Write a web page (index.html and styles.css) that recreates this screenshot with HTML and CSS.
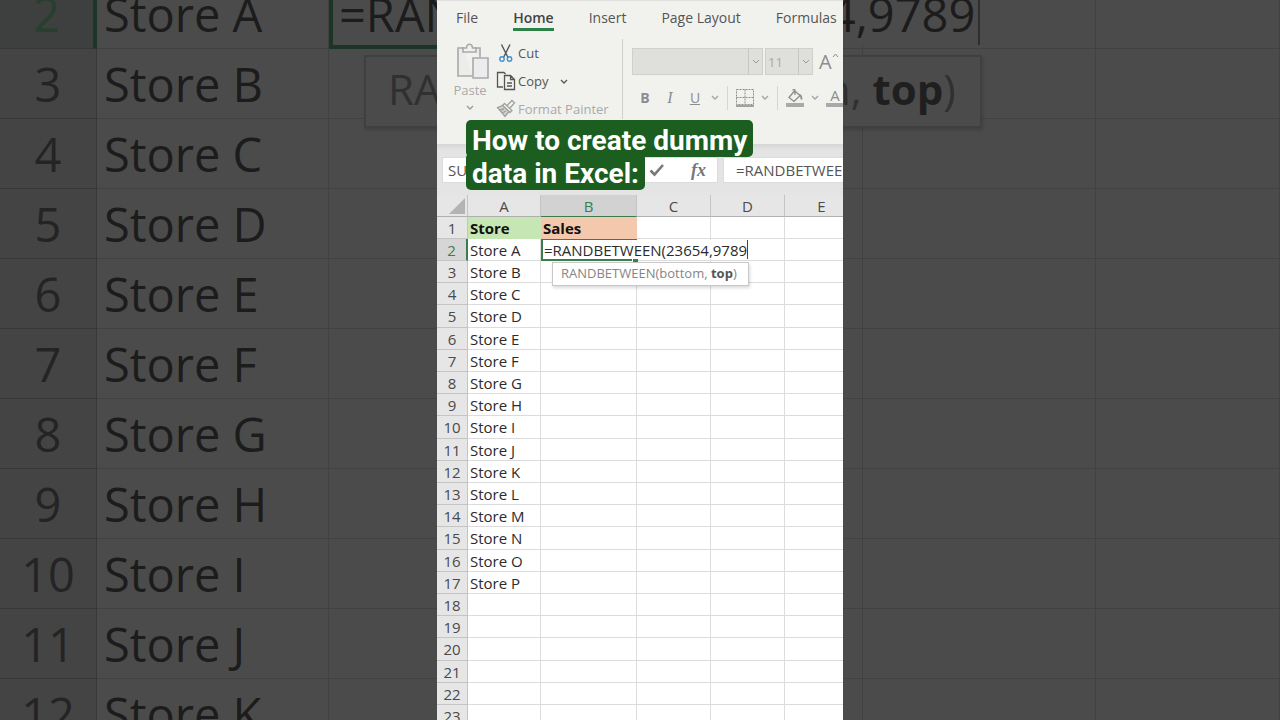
FILE: index.html
```
<!DOCTYPE html>
<html lang="en">
<head>
    <meta charset="utf-8">
    <meta name="viewport" content="width=device-width, initial-scale=1.0">
    <title>How to create dummy data in Excel</title>
    <link rel="stylesheet" href="styles.css">
</head>
<body>
    <div class="stage">
        <!-- Enlarged dark copy of the sheet -->
        <div class="backdrop" aria-hidden="true">
            <table class="sheet">
                <colgroup><col class="col-num"><col class="col-a"><col class="col-b"><col class="col-c"><col class="col-d"><col></colgroup>
                <tbody>
                    <tr class="active"><th>2</th><td>Store A</td><td class="editing">
                        <div class="editor">=RANDBETWEEN(23654,9789</div>
                        <div class="hint">RANDBETWEEN(bottom, <b>top</b>)</div>
                    </td><td></td><td></td><td></td></tr>
                    <tr><th>3</th><td>Store B</td><td></td><td></td><td></td><td></td></tr>
                    <tr><th>4</th><td>Store C</td><td></td><td></td><td></td><td></td></tr>
                    <tr><th>5</th><td>Store D</td><td></td><td></td><td></td><td></td></tr>
                    <tr><th>6</th><td>Store E</td><td></td><td></td><td></td><td></td></tr>
                    <tr><th>7</th><td>Store F</td><td></td><td></td><td></td><td></td></tr>
                    <tr><th>8</th><td>Store G</td><td></td><td></td><td></td><td></td></tr>
                    <tr><th>9</th><td>Store H</td><td></td><td></td><td></td><td></td></tr>
                    <tr><th>10</th><td>Store I</td><td></td><td></td><td></td><td></td></tr>
                    <tr><th>11</th><td>Store J</td><td></td><td></td><td></td><td></td></tr>
                    <tr><th>12</th><td>Store K</td><td></td><td></td><td></td><td></td></tr>
                </tbody>
            </table>
        </div>

        <main class="phone">
            <header class="ribbon">
                <nav class="tabs">
                    <a href="#">File</a>
                    <a href="#" class="current">Home</a>
                    <a href="#">Insert</a>
                    <a href="#">Page Layout</a>
                    <a href="#">Formulas</a>
                </nav>
                <div class="groups">
                    <div class="group clipboard">
                        <button class="paste">
                            <svg width="34" height="36" viewBox="0 0 34 36" fill="none" stroke="#a9a9a9" stroke-width="1.6">
                                <path d="M8 5H2v28h14M24 14V5h-6" fill="#ececea"/>
                                <path d="M7 9V5h3.500c.5-5 5.500-5 6 0H20v4z" fill="#f1f2ee"/>
                                <path d="M17 15h15v20H17z" fill="#ececef"/>
                            </svg>
                            <span>Paste</span>
                            <svg class="chevron" width="8" height="5" viewBox="0 0 8 5"><path d="M1 1l3 3 3-3"/></svg>
                        </button>
                        <div class="clip-actions">
                            <button>
                                <svg width="20" height="20" viewBox="0 0 20 20" fill="none">
                                    <path d="M5.500 1.500l6.500 13M14 1.500l-6.500 13" stroke="#555" stroke-width="1.400"/>
                                    <circle cx="6" cy="16" r="2.200" stroke="#3b93cf" stroke-width="1.400"/>
                                    <circle cx="13.500" cy="16" r="2.200" stroke="#3b93cf" stroke-width="1.400"/>
                                </svg>
                                <span>Cut</span>
                            </button>
                            <button>
                                <svg width="20" height="20" viewBox="0 0 20 20" fill="none" stroke="#555" stroke-width="1.300">
                                    <path d="M7 16H1.500V1.500H8l1.500 1.500"/>
                                    <path d="M8.500 4.500h6l4 4v10h-10zM14.500 4.500v4h4M11 12h5M11 15h5"/>
                                </svg>
                                <span>Copy</span>
                                <svg class="chevron dark" width="8" height="5" viewBox="0 0 8 5"><path d="M1 1l3 3 3-3"/></svg>
                            </button>
                            <button class="off">
                                <svg width="20" height="20" viewBox="0 0 20 20" fill="none" stroke="#a0a0a0" stroke-width="1.300">
                                    <path d="M11 6.500l5-5 2.500 2.500-4.500 5"/>
                                    <path d="M8.500 4.500l7.500 7-2 2-7.500-7z"/>
                                    <path d="M6.500 6.500l-5 2 7.500 9 4-5z" fill="#d0d0ce"/>
                                    <path d="M4 11l4-1M6 14l4-2"/>
                                </svg>
                                <span>Format Painter</span>
                            </button>
                        </div>
                    </div>
                    <div class="group font">
                        <div class="font-row">
                            <select class="font-name" aria-label="Font"><option></option></select>
                            <select class="font-size" aria-label="Font size"><option>11</option></select>
                            <button class="grow" aria-label="Increase font size">A<svg width="7" height="5" viewBox="0 0 7 5"><path d="M1 4l2.500-3L6 4"/></svg></button>
                        </div>
                        <div class="font-row tools">
                            <button><b>B</b></button>
                            <button><i>I</i></button>
                            <button><u>U</u></button>
                            <svg class="chevron" width="8" height="5" viewBox="0 0 8 5"><path d="M1 1l3 3 3-3"/></svg>
                            <span class="sep"></span>
                            <button aria-label="Borders">
                                <svg width="18" height="18" viewBox="0 0 18 18" fill="none" stroke="#8d8d8d">
                                    <path d="M.5 .5h17v15H.5zM9 .5v15M.5 8.500h17" stroke-dasharray="2 1"/>
                                    <path d="M0 17h18" stroke-width="1.600"/>
                                </svg>
                            </button>
                            <svg class="chevron" width="8" height="5" viewBox="0 0 8 5"><path d="M1 1l3 3 3-3"/></svg>
                            <span class="sep"></span>
                            <button aria-label="Fill color">
                                <svg width="18" height="18" viewBox="0 0 18 18" fill="none" stroke="#8d8d8d" stroke-width="1.300">
                                    <path d="M8 2.500L3 8.500l5 4 6-6-5-4.500zM9 6V1.500c0-1.500-2-1.500-2 0"/>
                                    <path d="M13 5.500c2 .5 2.500 3 2.500 5" stroke-width="1.800"/>
                                    <path d="M0 16h18" stroke="#a9a9a9" stroke-width="4"/>
                                </svg>
                            </button>
                            <svg class="chevron" width="8" height="5" viewBox="0 0 8 5"><path d="M1 1l3 3 3-3"/></svg>
                            <button class="font-color" aria-label="Font color">A</button>
                        </div>
                    </div>
                </div>
            </header>

            <div class="formula-bar">
                <div class="name-box">
                    <input class="name" aria-label="Name box" value="SUM">
                    <svg width="16" height="14" viewBox="0 0 16 14" fill="none" stroke="#777" stroke-width="2.600"><path d="M1.500 7.500l4 4L14 2"/></svg>
                    <span class="fx">fx</span>
                </div>
                <input class="formula" aria-label="Formula" value="=RANDBETWEEN(23654,9789">
            </div>

            <table class="sheet">
                <colgroup><col class="col-num"><col class="col-a"><col class="col-b"><col class="col-c"><col class="col-d"><col></colgroup>
                <thead>
                    <tr><th class="corner"><svg width="16" height="16" viewBox="0 0 16 16"><path d="M16 0v16H0z" fill="#b3b3b3"/></svg></th><th>A</th><th class="selected">B</th><th>C</th><th>D</th><th>E</th></tr>
                </thead>
                <tbody>
                    <tr><th>1</th><td class="store-head">Store</td><td class="sales-head">Sales</td><td></td><td></td><td></td></tr>
                    <tr class="active"><th>2</th><td>Store A</td><td class="editing">
                        <input class="editor" aria-label="Cell B2" value="=RANDBETWEEN(23654,9789">
                        <div class="hint">RANDBETWEEN(bottom, <b>top</b>)</div>
                    </td><td></td><td></td><td></td></tr>
                    <tr><th>3</th><td>Store B</td><td></td><td></td><td></td><td></td></tr>
                    <tr><th>4</th><td>Store C</td><td></td><td></td><td></td><td></td></tr>
                    <tr><th>5</th><td>Store D</td><td></td><td></td><td></td><td></td></tr>
                    <tr><th>6</th><td>Store E</td><td></td><td></td><td></td><td></td></tr>
                    <tr><th>7</th><td>Store F</td><td></td><td></td><td></td><td></td></tr>
                    <tr><th>8</th><td>Store G</td><td></td><td></td><td></td><td></td></tr>
                    <tr><th>9</th><td>Store H</td><td></td><td></td><td></td><td></td></tr>
                    <tr><th>10</th><td>Store I</td><td></td><td></td><td></td><td></td></tr>
                    <tr><th>11</th><td>Store J</td><td></td><td></td><td></td><td></td></tr>
                    <tr><th>12</th><td>Store K</td><td></td><td></td><td></td><td></td></tr>
                    <tr><th>13</th><td>Store L</td><td></td><td></td><td></td><td></td></tr>
                    <tr><th>14</th><td>Store M</td><td></td><td></td><td></td><td></td></tr>
                    <tr><th>15</th><td>Store N</td><td></td><td></td><td></td><td></td></tr>
                    <tr><th>16</th><td>Store O</td><td></td><td></td><td></td><td></td></tr>
                    <tr><th>17</th><td>Store P</td><td></td><td></td><td></td><td></td></tr>
                    <tr><th>18</th><td></td><td></td><td></td><td></td><td></td></tr>
                    <tr><th>19</th><td></td><td></td><td></td><td></td><td></td></tr>
                    <tr><th>20</th><td></td><td></td><td></td><td></td><td></td></tr>
                    <tr><th>21</th><td></td><td></td><td></td><td></td><td></td></tr>
                    <tr><th>22</th><td></td><td></td><td></td><td></td><td></td></tr>
                    <tr><th>23</th><td></td><td></td><td></td><td></td><td></td></tr>
                </tbody>
            </table>

            <h1 class="caption"><span>How to create dummy<br>data in Excel:</span></h1>
        </main>
    </div>
</body>
</html>
```
FILE: styles.css
```
* {
    box-sizing: border-box;
}

body {
    margin: 0;
    background: #4b4b4b;
    font-family: "Open Sans", "Noto Sans", sans-serif;
    color: #333;
}

button, input, select {
    font: inherit;
    color: inherit;
    border: none;
    border-radius: 0;
    background: none;
    padding: 0;
    margin: 0;
}

.stage {
    display: grid;
    height: 100vh;
    overflow: hidden;
}

.backdrop, .phone {
    grid-area: 1 / 1;
    min-width: 0;
    min-height: 0;
    isolation: isolate;
}

.phone {
    position: relative;
    z-index: 1;
    justify-self: center;
    width: 100%;
    max-width: 406px;
    overflow: hidden;
    background: #fff;
}

/* Ribbon */
.ribbon {
    height: 144px;
    background: #f1f2ee;
    border-top: 1px solid #e0e0de;
}

.tabs {
    display: flex;
    gap: 35px;
    padding: 7px 0 0 19px;
    font-size: 14px;
    line-height: 20px;
    white-space: nowrap;
}

.tabs a {
    color: #555;
    text-decoration: none;
    border-bottom: 3px solid transparent;
}

.tabs .current {
    font-weight: 600;
    color: #444;
    border-color: #2e8049;
}

.groups {
    display: flex;
    padding-top: 8px;
    font-size: 13px;
}

.group {
    height: 80px;
}

.clipboard {
    display: flex;
    flex: none;
    width: 186px;
    padding-left: 16px;
    border-right: 1px solid #cfcfcd;
}

.paste {
    display: flex;
    flex-direction: column;
    align-items: center;
    width: 34px;
    padding-top: 4px;
    line-height: 22px;
    color: #a9a9a9;
}

.paste svg {
    flex: none;
    margin-left: 6px;
}

.paste .chevron {
    margin: 4px 0 0;
}

.clip-actions {
    display: flex;
    flex-direction: column;
    gap: 8px;
    margin-left: 9px;
    padding-top: 4px;
    color: #555;
}

.clip-actions button {
    display: flex;
    align-items: center;
    gap: 2px;
    height: 20px;
    white-space: nowrap;
}

.clip-actions .off {
    color: #a9a9a9;
}

.clip-actions .chevron {
    margin-left: 10px;
}

.chevron {
    flex: none;
    fill: none;
    stroke: #9a9a9a;
    stroke-width: 1.3;
}

.chevron.dark {
    stroke: #555;
}

.font {
    padding: 9px 0 0 9px;
}

.font-row {
    display: flex;
    align-items: center;
    gap: 2px;
    height: 27px;
}

.font-row select {
    appearance: none;
    height: 27px;
    border: 1px solid #cfcfcd;
    color: #a9a9a9;
    background: #dfdfdc url("data:image/svg+xml;charset=UTF-8,%3csvg xmlns='http://www.w3.org/2000/svg' width='14' height='27' fill='none' stroke='%23999'%3e%3cpath d='M.5 0v27' stroke='%23c6c6c4'/%3e%3cpath d='M5 12l3 3 3-3'/%3e%3c/svg%3e") no-repeat right center;
}

.font-name {
    width: 131px;
}

.font-size {
    width: 48px;
    padding-left: 2px;
}

.grow {
    display: flex;
    margin-left: 4px;
    font-size: 20px;
    line-height: 30px;
    color: #8d8d8d;
}

.grow svg {
    margin-top: 6px;
    fill: none;
    stroke: #8d8d8d;
}

.tools {
    gap: 7px;
    margin-top: 9px;
    padding-left: 4px;
    font-size: 14px;
    color: #8d8d8d;
}

.tools button {
    display: flex;
    justify-content: center;
    flex: none;
    width: 18px;
}

.tools .chevron {
    stroke: #a2a2a2;
}

.tools i {
    font-family: "Liberation Serif", serif;
    font-size: 16px;
}

.tools .sep {
    width: 1px;
    height: 24px;
    margin: 0 1px;
    background: #d6d6d4;
}

.tools .font-color {
    font-size: 15px;
    line-height: 15px;
    border-bottom: 4px solid #a9a9a9;
}

/* Formula bar */
.formula-bar {
    display: flex;
    gap: 5px;
    height: 51px;
    padding: 13px 0 12px 5px;
    background: linear-gradient(#d6d6d6, #e4e4e4 6px);
    font-size: 15px;
    color: #555;
}

.name-box {
    display: flex;
    align-items: center;
    flex: none;
    width: 276px;
    padding-left: 5px;
    background: #fff;
    border: 1px solid #dcdcdc;
}

.name {
    width: 201px;
}

.fx {
    margin-left: 26px;
    font: italic 700 18px/20px "Liberation Serif", serif;
    color: #777;
}

.formula {
    flex: 1;
    min-width: 0;
    padding-left: 12px;
    background: #fff;
    border: 1px solid #dcdcdc;
    border-right: none;
}

/* Sheet */
.sheet {
    --row: 22px;
    --line: #dcdcdc;
    --head: #e6e6e6;
    --head-line: #c4c4c4;
    --green: #3a7d50;
    width: 100%;
    table-layout: fixed;
    border-collapse: separate;
    border-spacing: 0;
    font-size: 15px;
    line-height: 20px;
    color: #2b2b2b;
}

/* column E runs past the right edge */
.phone .sheet {
    width: calc(100% + 16px);
}

.col-num { width: 31px; }
.col-a { width: 73px; }
.col-b { width: 96px; }
.col-c { width: 74px; }
.col-d { width: 74px; }

.sheet th, .sheet td {
    height: var(--row);
    padding: 0 0 0 2px;
    border-right: 1px solid var(--line);
    border-bottom: 1px solid var(--line);
    text-align: left;
    white-space: nowrap;
}

.sheet th {
    padding: 0;
    background: var(--head);
    border-color: var(--head-line);
    font-weight: 400;
    color: #4a4a4a;
    text-align: center;
}

.sheet thead th {
    border-bottom-color: #b0b0b0;
}

/* every fifth row is one pixel taller */
.phone tbody tr:nth-child(5n) > * {
    height: 23px;
}

.corner svg {
    display: block;
    margin: 0 2px 0 auto;
}

.sheet .selected {
    background: #d2d2d2;
    border-bottom-color: var(--green);
    color: var(--green);
}

.sheet .active th {
    background: #d6d6d6;
    border-right: 2px solid var(--green);
    color: var(--green);
}

.sheet .store-head, .sheet .sales-head {
    background: #c6e6b3;
    border-color: transparent;
    font-weight: 700;
    color: #111;
}

.sheet .sales-head {
    background: #f3c8ad;
}

.sheet .editing {
    position: relative;
    border: 2px solid var(--green);
    border-top-width: 1px;
    border-right-width: 1px;
}

.editor {
    position: absolute;
    top: 0;
    left: 0;
    z-index: 1;
    width: 205px;
    height: 19px;
    padding-left: 1px;
    background: #fff;
    border-right: 1px solid #444;
}

.phone .editing::after {
    content: "";
    position: absolute;
    right: -2px;
    bottom: -3px;
    width: 5px;
    height: 4px;
    background: var(--green);
    border-left: 1px solid #fff;
}

.hint {
    position: absolute;
    top: 22px;
    left: 9px;
    z-index: 2;
    width: 197px;
    height: 24px;
    padding-left: 8px;
    border: 1px solid #c8c8c8;
    background: #fff;
    box-shadow: 1px 2px 3px rgba(0, 0, 0, 0.15);
    font-size: 13px;
    line-height: 21px;
    color: #858585;
}

.hint b {
    color: #555;
}

/* Dark copy behind the phone */
.backdrop .sheet {
    --row: 70px;
    --line: #414141;
    --head: #444;
    --head-line: #383838;
    --green: #1c3526;
    margin-top: -21px;
    font-size: 47px;
    line-height: 60px;
    color: #1c1c1c;
}

.backdrop .col-num { width: 97px; }
.backdrop .col-a { width: 232px; }
.backdrop .col-b { width: 303px; }
.backdrop .col-c { width: 231px; }
.backdrop .col-d { width: 233px; }

.backdrop .sheet td {
    padding-left: 7px;
}

.backdrop .sheet th {
    color: #242424;
}

.backdrop .sheet .active th {
    background: #3d403e;
    border-right-width: 4px;
    color: #263f2f;
}

.backdrop .sheet .editing {
    border-left-width: 4px;
    border-bottom-width: 4px;
}

.backdrop .editor {
    width: 647px;
    height: 65px;
    padding-left: 6px;
    background: #4b4b4b;
    border-right: 2px solid #2e2e2e;
    line-height: 68px;
}

.backdrop .hint {
    top: 75px;
    left: 31px;
    width: 618px;
    height: 73px;
    padding-left: 22px;
    border: 2px solid #404040;
    background: #4b4b4b;
    font-size: 42px;
    line-height: 64px;
    color: #303030;
}

.backdrop .hint b {
    color: #1f1f1f;
}

/* Caption over the sheet */
.caption {
    position: absolute;
    top: 124px;
    left: 29px;
    z-index: 3;
    margin: 0;
    font: 700 28px/33px Roboto, sans-serif;
    color: #fff;
    white-space: nowrap;
}

.caption span {
    padding: 4px 6px 0;
    border-radius: 5px;
    background: #1b5e20;
    -webkit-box-decoration-break: clone;
    box-decoration-break: clone;
}
```
